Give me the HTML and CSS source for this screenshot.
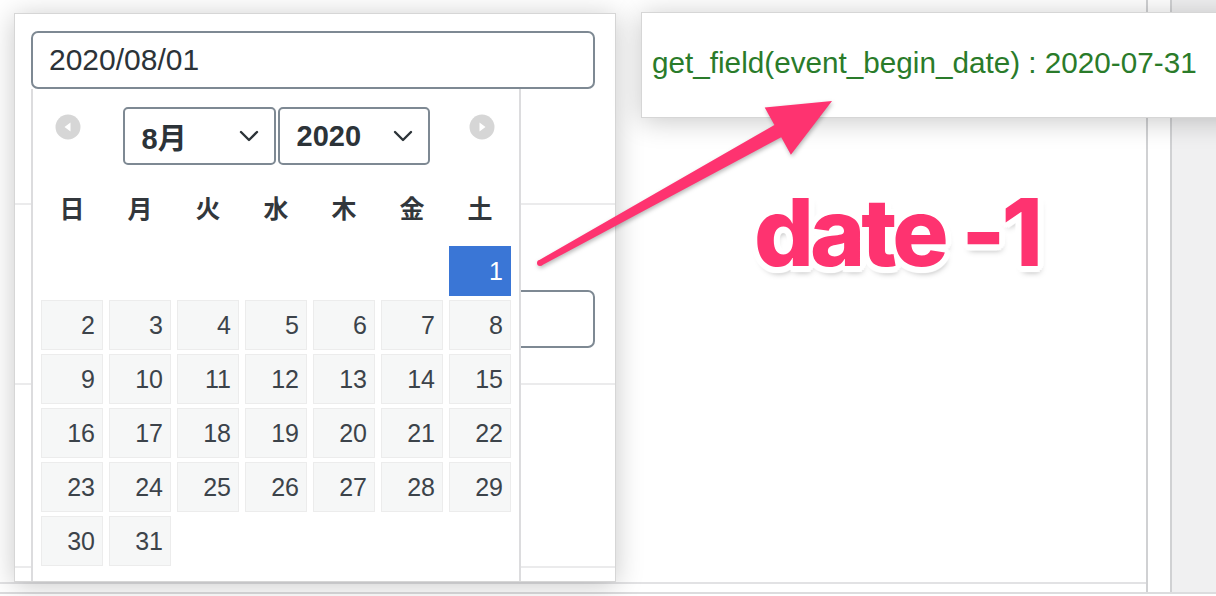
FILE: index.html
```html
<!DOCTYPE html>
<html lang="ja">
<head>
<meta charset="utf-8">
<title>date -1</title>
<link rel="stylesheet" href="styles.css">
</head>
<body>
<div class="desk">
  <div class="backdrop">
    <main class="main">
      <div class="stage">
        <section class="shot shot-form">
          <div class="field field-1"><div class="input">2020/08/01</div></div>
          <div class="field field-2"><div class="input"></div></div>
          <div class="field field-3"></div>
          <div class="field field-4"></div>

          <div class="datepicker">
            <div class="dp-head">
              <span class="dp-nav dp-prev">
                <svg viewBox="0 0 26 26"><circle cx="13" cy="13" r="12.5" fill="#d6d6d6"/><path d="M15.5 8.5 L9.5 13 L15.5 17.5 Z" fill="#fff"/></svg>
              </span>
              <div class="dp-selects">
                <div class="select select-month"><span>8月</span><svg class="chev" viewBox="0 0 20 12"><polyline points="2,2 10,10 18,2" fill="none" stroke="#2c3338" stroke-width="2.4" stroke-linecap="round" stroke-linejoin="round"/></svg></div>
                <div class="select select-year"><span>2020</span><svg class="chev" viewBox="0 0 20 12"><polyline points="2,2 10,10 18,2" fill="none" stroke="#2c3338" stroke-width="2.4" stroke-linecap="round" stroke-linejoin="round"/></svg></div>
              </div>
              <span class="dp-nav dp-next">
                <svg viewBox="0 0 26 26"><circle cx="13" cy="13" r="12.5" fill="#d6d6d6"/><path d="M10.5 8.5 L16.5 13 L10.5 17.5 Z" fill="#fff"/></svg>
              </span>
            </div>
            <div class="dp-week">
              <span>日</span><span>月</span><span>火</span><span>水</span><span>木</span><span>金</span><span>土</span>
            </div>
            <div class="dp-days">
              <span class="day empty"></span><span class="day empty"></span><span class="day empty"></span><span class="day empty"></span><span class="day empty"></span><span class="day empty"></span><span class="day active">1</span>
              <span class="day">2</span><span class="day">3</span><span class="day">4</span><span class="day">5</span><span class="day">6</span><span class="day">7</span><span class="day">8</span>
              <span class="day">9</span><span class="day">10</span><span class="day">11</span><span class="day">12</span><span class="day">13</span><span class="day">14</span><span class="day">15</span>
              <span class="day">16</span><span class="day">17</span><span class="day">18</span><span class="day">19</span><span class="day">20</span><span class="day">21</span><span class="day">22</span>
              <span class="day">23</span><span class="day">24</span><span class="day">25</span><span class="day">26</span><span class="day">27</span><span class="day">28</span><span class="day">29</span>
              <span class="day">30</span><span class="day">31</span>
            </div>
          </div>
        </section>

        <section class="shot shot-output">
          <p>get_field(event_begin_date) : 2020-07-31</p>
        </section>
      </div>
      <div class="main-foot"></div>
    </main>
    <aside class="side"></aside>
    <div class="rest"></div>
  </div>

  <svg class="arrow" viewBox="0 0 1216 596">
    <g class="arrow-shape">
      <polygon points="538.5,260.4 774.4,125.0 764.7,107.5 832,101 790.9,154.7 781.2,137.2 541.5,265.6"/>
      <circle cx="540" cy="263" r="3"/>
    </g>
  </svg>
  <div class="note">date -1</div>
</div>
</body>
</html>
```

FILE: styles.css
```css
* {
  box-sizing: border-box;
}

html,
body {
  margin: 0;
  height: 100%;
  overflow: hidden;
  background: #fff;
}

body {
  font-family: "Liberation Sans", "Noto Sans CJK JP", sans-serif;
  color: #2c3338;
}

.desk {
  position: relative;
  width: 1216px;
  height: 596px;
}

/* page behind the screenshots */
.backdrop {
  display: flex;
  height: 594px;
  border-bottom: 2px solid #dcdcde;
}

.main {
  width: 1148px;
  border-right: 2px solid #d0d1d3;
  display: flex;
  flex-direction: column;
}

.stage {
  height: 584px;
  border-bottom: 2px solid #e2e2e4;
  padding: 13px 0 0 14px;
  display: flex;
  align-items: flex-start;
  gap: 25px;
}

.main-foot {
  flex: 1;
}

.side {
  width: 24px;
  border-right: 2px solid #d0d1d3;
}

.rest {
  flex: 1;
  background: #f0f0f1;
}

/* screenshot cards */
.shot {
  position: relative;
  z-index: 2;
  flex: none;
  background: #fff;
  border: 1px solid #d6d6d6;
  box-shadow: 0 3px 26px rgba(0, 0, 0, 0.22);
}

.shot-form {
  width: 602px;
  height: 569px;
  overflow: hidden;
}

.shot-output {
  width: 620px;
  height: 106px;
  margin-top: -1px;
  display: flex;
  align-items: center;
  padding: 0 0 5px 10px;
}

.shot-output p {
  margin: 0;
  font-size: 29.7px;
  color: #2a7b2a;
  white-space: nowrap;
}

/* form rows */
.field {
  border-bottom: 2px solid #ebebec;
  padding: 0 20px 0 16px;
}

.field-1 {
  height: 191px;
  padding-top: 17px;
}

.field-2 {
  height: 180px;
  padding-top: 85px;
}

.field-3 {
  height: 183px;
}

.field-4 {
  border-bottom: 0;
  height: 40px;
}

.input {
  height: 58px;
  border: 2px solid #7e8993;
  border-radius: 7px;
  padding-left: 16px;
  display: flex;
  align-items: center;
  font-size: 30px;
  color: #2c3338;
  background: #fff;
}

/* datepicker popup */
.datepicker {
  position: absolute;
  z-index: 1;
  left: 16px;
  top: 75px;
  width: 490px;
  height: 520px;
  background: #fff;
  border: 2px solid #dcdcde;
  border-top: 0;
  padding: 18px 8px 0;
}

.dp-head {
  display: grid;
  grid-template-columns: 1fr auto 1fr;
  align-items: start;
}

.dp-nav svg {
  display: block;
  width: 26px;
  height: 26px;
  filter: blur(0.4px);
}

.dp-prev {
  justify-self: start;
  margin: 7px 0 0 14px;
}

.dp-next {
  justify-self: end;
  margin: 7px 16px 0 0;
}

.dp-selects {
  display: flex;
  gap: 2px;
}

.select {
  height: 58px;
  border: 2px solid #7e8993;
  border-radius: 5px;
  display: flex;
  align-items: center;
  justify-content: space-between;
  padding: 0 15px 0 17px;
  font-size: 29px;
  font-weight: 700;
  color: #2c3338;
}

.select-month {
  width: 153px;
}

.select-year {
  width: 152px;
}

.chev {
  width: 20px;
  height: 12px;
  display: block;
}

.dp-week {
  display: grid;
  grid-template-columns: repeat(7, 62px);
  column-gap: 6px;
  margin-top: 17px;
  height: 50px;
  align-items: center;
  text-align: center;
  font-size: 25px;
  font-weight: 700;
  color: #32373c;
}

.dp-days {
  display: grid;
  grid-template-columns: repeat(7, 62px);
  grid-auto-rows: 50px;
  gap: 4px 6px;
  margin-top: 14px;
}

.day {
  display: flex;
  align-items: center;
  justify-content: flex-end;
  padding-right: 7px;
  font-size: 25px;
  color: #3c434a;
  background: #f6f7f7;
  border: 1px solid #ececec;
}

.day.empty {
  background: none;
  border: 0;
}

.day.active {
  background: #3a76d6;
  border-color: #3a76d6;
  color: #fff;
}

/* annotation */
.arrow {
  position: absolute;
  z-index: 5;
  left: 0;
  top: 0;
  width: 1216px;
  height: 596px;
  pointer-events: none;
}

.arrow-shape {
  fill: #fe3370;
  filter: drop-shadow(1px 2px 2px rgba(0, 0, 0, 0.28));
}

.note {
  position: absolute;
  z-index: 5;
  left: 754px;
  top: 185px;
  font-family: Inter, "Liberation Sans", sans-serif;
  font-size: 94px;
  font-weight: 800;
  letter-spacing: -4px;
  line-height: 1;
  color: #fe3370;
  white-space: nowrap;
  text-shadow:
    6px 0 1px #fff, 5.5px 2.3px 1px #fff, 4.2px 4.2px 1px #fff, 2.3px 5.5px 1px #fff,
    0 6px 1px #fff, -2.3px 5.5px 1px #fff, -4.2px 4.2px 1px #fff, -5.5px 2.3px 1px #fff,
    -6px 0 1px #fff, -5.5px -2.3px 1px #fff, -4.2px -4.2px 1px #fff, -2.3px -5.5px 1px #fff,
    0 -6px 1px #fff, 2.3px -5.5px 1px #fff, 4.2px -4.2px 1px #fff, 5.5px -2.3px 1px #fff,
    3px 0 0 #fff, 0 3px 0 #fff, -3px 0 0 #fff, 0 -3px 0 #fff,
    2px 6px 6px rgba(0, 0, 0, 0.35);
}
```
